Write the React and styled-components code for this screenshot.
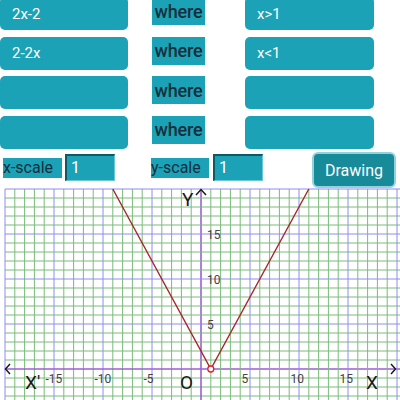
import React from 'react';
import styled, { createGlobalStyle } from 'styled-components';

const GlobalStyle = createGlobalStyle`
  html, body {
    margin: 0;
    padding: 0;
    background: #ffffff;
    font-family: Roboto, "Noto Sans", sans-serif;
    overflow: hidden;
  }
`;

const Page = styled.div`
  width: 400px;
  margin-top: -3px;
`;

const FormulaList = styled.div`
  display: flex;
  flex-direction: column;
  gap: 6.5px;
`;

const FormulaRow = styled.div`
  display: flex;
  align-items: flex-start;
  height: 33px;
`;

const Field = styled.div`
  box-sizing: border-box;
  width: ${(p) => p.width}px;
  margin-left: ${(p) => p.offset || 0}px;
  height: 33px;
  padding-left: 12px;
  display: flex;
  align-items: center;
  background: #1ba2b6;
  border-radius: 5px;
  color: #ffffff;
  font-size: 15px;
`;

const Where = styled.div`
  box-sizing: border-box;
  width: 53px;
  height: 28px;
  margin-left: 24px;
  background: #1ba2b6;
  color: #152f3c;
  font-size: 18px;
  font-weight: 500;
  display: flex;
  align-items: center;
  justify-content: center;
  letter-spacing: -0.2px;
`;

const ScaleRow = styled.div`
  display: flex;
  align-items: flex-start;
  height: 36px;
  margin-top: 3.5px;
`;

const ScaleLabel = styled.div`
  box-sizing: border-box;
  width: ${(p) => p.width}px;
  height: 20px;
  margin-left: ${(p) => p.offset}px;
  margin-top: 6px;
  background: #1ba2b6;
  color: #152f3c;
  font-size: 16px;
  line-height: 20px;
  white-space: nowrap;
`;

const ScaleInput = styled.div`
  box-sizing: border-box;
  width: 50px;
  height: 27px;
  margin-left: ${(p) => p.offset}px;
  margin-top: 2px;
  padding-left: 4px;
  background: #1ba2b6;
  border-top: 2px solid #0d5966;
  border-left: 2px solid #0d5966;
  border-right: 1px solid #6cc6d3;
  border-bottom: 1px solid #6cc6d3;
  color: #ffffff;
  font-size: 16px;
  line-height: 23px;
`;

const DrawButton = styled.button`
  box-sizing: border-box;
  width: 84px;
  height: 36px;
  margin-left: 49px;
  background: #188b9b;
  border: 2px solid #93d2dc;
  border-radius: 6px;
  color: #ffffff;
  font-family: Roboto, sans-serif;
  font-size: 16px;
  padding: 0;
`;

const Graph = styled.svg`
  display: block;
  width: 400px;
  height: 212px;
`;

const OX = 201;
const OY = 181;
const UX = 9.8;
const UY = 9.0;

const rows = [
  ['2x-2', 'x>1'],
  ['2-2x', 'x<1'],
  ['', ''],
  ['', ''],
];

function Plot() {
  const lines = [];
  for (let i = -20; i <= 20; i++) {
    const x = OX + i * UX;
    const y = OY - i * UY;
    const axis = i === 0;
    const major = i % 5 === 0;
    const stroke = axis ? '#9a5fd6' : major ? '#8c8cf0' : '#7abb7a';
    const w = axis ? 1.6 : 1;
    lines.push(<line key={'v' + i} x1={x} y1={OY - 20 * UY} x2={x} y2={400} stroke={stroke} strokeWidth={w} />);
    lines.push(<line key={'h' + i} x1={OX - 20 * UX} y1={y} x2={400} y2={y} stroke={stroke} strokeWidth={w} />);
  }
  const px = (v) => OX + v * UX;
  const py = (v) => OY - v * UY;
  const xTicks = [-15, -10, -5, 5, 10, 15];
  const yTicks = [5, 10, 15];
  return (
    <Graph viewBox="0 0 400 212">
      {lines}
      <polyline
        points={`${px(-9)},${py(20)} ${px(1)},${py(0)} ${px(11)},${py(20)}`}
        fill="none"
        stroke="#a8262a"
        strokeWidth="1.4"
      />
      <circle cx={px(1)} cy={py(0)} r="3" fill="#ffffff" stroke="#e0202a" strokeWidth="1.3" />
      {xTicks.map((t) => (
        <text key={t} x={px(t) - 8.5} y={OY + 14} fontSize="12" fill="#444444" fontFamily="Roboto, sans-serif">
          {t}
        </text>
      ))}
      {yTicks.map((t) => (
        <text key={t} x={OX + 6} y={py(t) + 4.5} fontSize="12" fill="#444444" fontFamily="Roboto, sans-serif">
          {t}
        </text>
      ))}
      <g fontFamily="Roboto, sans-serif" fontSize="19" fill="#1a1a1a">
        <text x="25" y={OY + 20}>X'</text>
        <text x="180" y={OY + 20}>O</text>
        <text x="366" y={OY + 20}>X</text>
        <text x="182" y="18">Y</text>
      </g>
      <g fill="none" stroke="#1a1a1a" strokeWidth="1.5">
        <polyline points={`10,${OY - 5} 5.5,${OY} 10,${OY + 5}`} />
        <polyline points={`391,${OY - 5} 395.5,${OY} 391,${OY + 5}`} />
        <polyline points={`196,7 ${OX},1.5 206,7`} />
      </g>
    </Graph>
  );
}

export default function App() {
  return (
    <Page>
      <GlobalStyle />
      <FormulaList>
        {rows.map(([f, c], i) => (
          <FormulaRow key={i}>
            <Field width={128}>{f}</Field>
            <Where>where</Where>
            <Field width={129} offset={40}>{c}</Field>
          </FormulaRow>
        ))}
      </FormulaList>
      <ScaleRow>
        <ScaleLabel width={59} offset={3}>x-scale</ScaleLabel>
        <ScaleInput offset={3}>1</ScaleInput>
        <ScaleLabel width={58} offset={36}>y-scale</ScaleLabel>
        <ScaleInput offset={4}>1</ScaleInput>
        <DrawButton>Drawing</DrawButton>
      </ScaleRow>
      <Plot />
    </Page>
  );
}
